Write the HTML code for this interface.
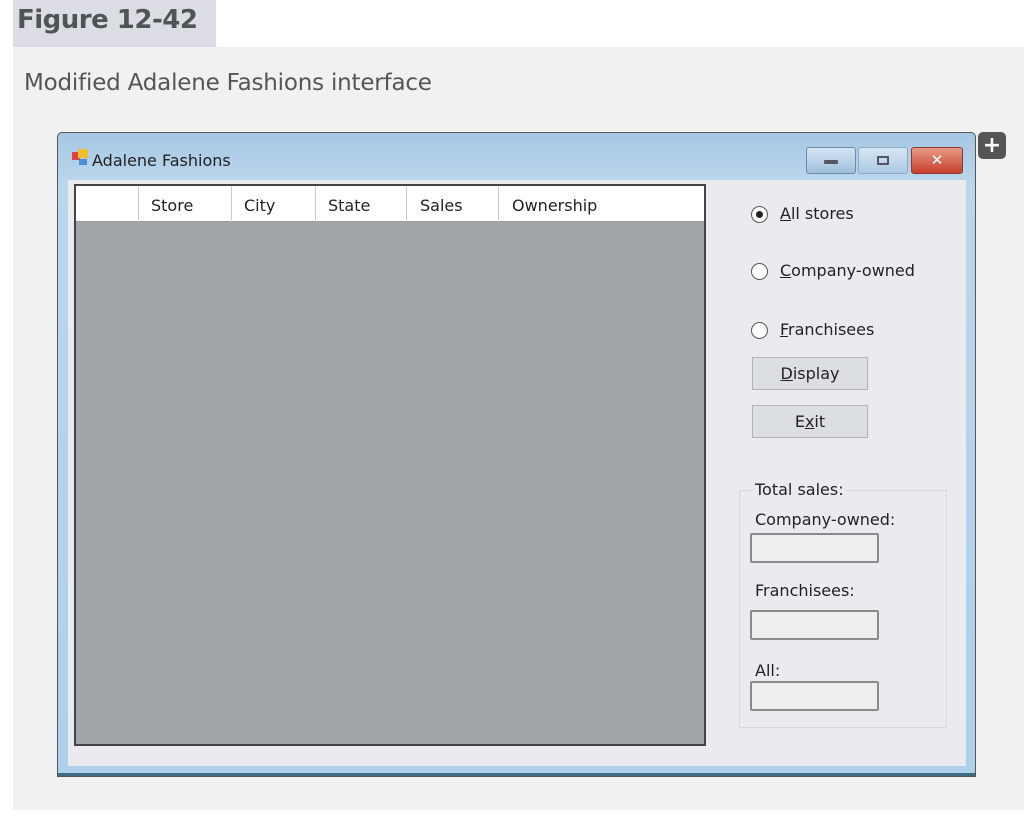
<!DOCTYPE html>
<html><head><style>
*{margin:0;padding:0;box-sizing:border-box}
body{width:1024px;height:829px;background:#fff;position:relative;overflow:hidden;font-family:"DejaVu Sans","Liberation Sans",sans-serif}
.a{position:absolute}
.t{font-size:16px;color:#222;letter-spacing:0}
u{text-decoration:underline}
.tb{background:#eceef0;border:2px solid #8a8a8a;border-radius:2px}
.btn{background:#dcdfe2;border:1px solid #b0b4b8;text-align:center;font-size:16px;color:#222;line-height:31px}
.rad{width:17px;height:17px;border-radius:50%;border:1px solid #555;background:#fff}
</style></head><body>
<div class="a" style="left:13px;top:47px;width:1011px;height:763px;background:#f1f1f1"></div>
<div class="a" style="left:13px;top:0;width:203px;height:47px;background:#dcdce4"></div>
<div class="a" style="left:17px;top:5px;font-size:26px;font-weight:bold;color:#4d5555;font-family:'DejaVu Sans',sans-serif;letter-spacing:-0.5px">Figure 12-42</div>
<div class="a" style="left:24px;top:70px;font-size:23px;color:#555;font-family:'DejaVu Sans',sans-serif;letter-spacing:-0.2px">Modified Adalene Fashions interface</div>

<div class="a" style="left:57px;top:132px;width:919px;height:645px;background:linear-gradient(#a5c7e4,#bcd6ec 50px,#aed0ea);border:1px solid #555;border-radius:5px 5px 0 0"></div>
<div class="a" style="left:58px;top:773px;width:917px;height:3px;background:#3d6b85"></div>
<div class="a" style="left:72px;top:152px;width:8px;height:8px;background:#d44"></div>
<div class="a" style="left:78px;top:149px;width:10px;height:9px;background:#eebf2e"></div>
<div class="a" style="left:79px;top:159px;width:8px;height:6px;background:#4b8fd6"></div>
<div class="a t" style="left:92px;top:151px">Adalene Fashions</div>
<div class="a" style="left:806px;top:147px;width:50px;height:27px;border:1px solid #6d8aa8;border-radius:3px;background:linear-gradient(#d5e5f3,#9ebfdc)"><div style="margin:12px auto 0;width:14px;height:4px;background:#556;border-radius:1px"></div></div>
<div class="a" style="left:858px;top:147px;width:50px;height:27px;border:1px solid #8eaac4;border-radius:3px;background:linear-gradient(#d5e5f3,#aecae3)"><div style="margin:8px auto 0;width:12px;height:9px;border:2px solid #556;border-radius:1px"></div></div>
<div class="a" style="left:911px;top:147px;width:52px;height:27px;border:1px solid #8a3a30;border-radius:3px;background:linear-gradient(#e89a88,#c8402a);color:#fff;text-align:center;font-weight:bold;font-size:15px;line-height:25px">✕</div>
<div class="a" style="left:978px;top:132px;width:28px;height:27px;background:#555;border-radius:5px;color:#fff;text-align:center;font-weight:bold;font-size:22px;line-height:27px">+</div>

<div class="a" style="left:68px;top:180px;width:898px;height:586px;background:#eaebee"></div>
<div class="a" style="left:74px;top:184px;width:632px;height:562px;background:#9fa5a8;border:2px solid #444"></div>
<div class="a" style="left:76px;top:186px;width:628px;height:36px;background:#fff;border-bottom:1px solid #999"></div>
<div class="a" style="left:138px;top:186px;width:1px;height:36px;background:#ccc"></div>
<div class="a" style="left:231px;top:186px;width:1px;height:36px;background:#ccc"></div>
<div class="a" style="left:315px;top:186px;width:1px;height:36px;background:#ccc"></div>
<div class="a" style="left:406px;top:186px;width:1px;height:36px;background:#ccc"></div>
<div class="a" style="left:498px;top:186px;width:1px;height:36px;background:#ccc"></div>
<div class="a t" style="left:151px;top:196px">Store</div>
<div class="a t" style="left:244px;top:196px">City</div>
<div class="a t" style="left:328px;top:196px">State</div>
<div class="a t" style="left:420px;top:196px">Sales</div>
<div class="a t" style="left:512px;top:196px">Ownership</div>

<div class="a rad" style="left:751px;top:206px"><div style="margin:4px;width:7px;height:7px;border-radius:50%;background:#222"></div></div>
<div class="a t" style="left:780px;top:204px"><u>A</u>ll stores</div>
<div class="a rad" style="left:751px;top:263px"></div>
<div class="a t" style="left:780px;top:261px"><u>C</u>ompany-owned</div>
<div class="a rad" style="left:751px;top:322px"></div>
<div class="a t" style="left:780px;top:320px"><u>F</u>ranchisees</div>
<div class="a btn" style="left:752px;top:357px;width:116px;height:33px"><u>D</u>isplay</div>
<div class="a btn" style="left:752px;top:405px;width:116px;height:33px">E<u>x</u>it</div>

<div class="a" style="left:739px;top:490px;width:208px;height:238px;border:1px solid #d6d8dc"></div>
<div class="a t" style="left:753px;top:480px;background:#eaebee;padding:0 2px">Total sales:</div>
<div class="a t" style="left:755px;top:510px">Company-owned:</div>
<div class="a tb" style="left:750px;top:533px;width:129px;height:30px"></div>
<div class="a t" style="left:755px;top:581px">Franchisees:</div>
<div class="a tb" style="left:750px;top:610px;width:129px;height:30px"></div>
<div class="a t" style="left:755px;top:661px">All:</div>
<div class="a tb" style="left:750px;top:681px;width:129px;height:30px"></div>
</body></html>
